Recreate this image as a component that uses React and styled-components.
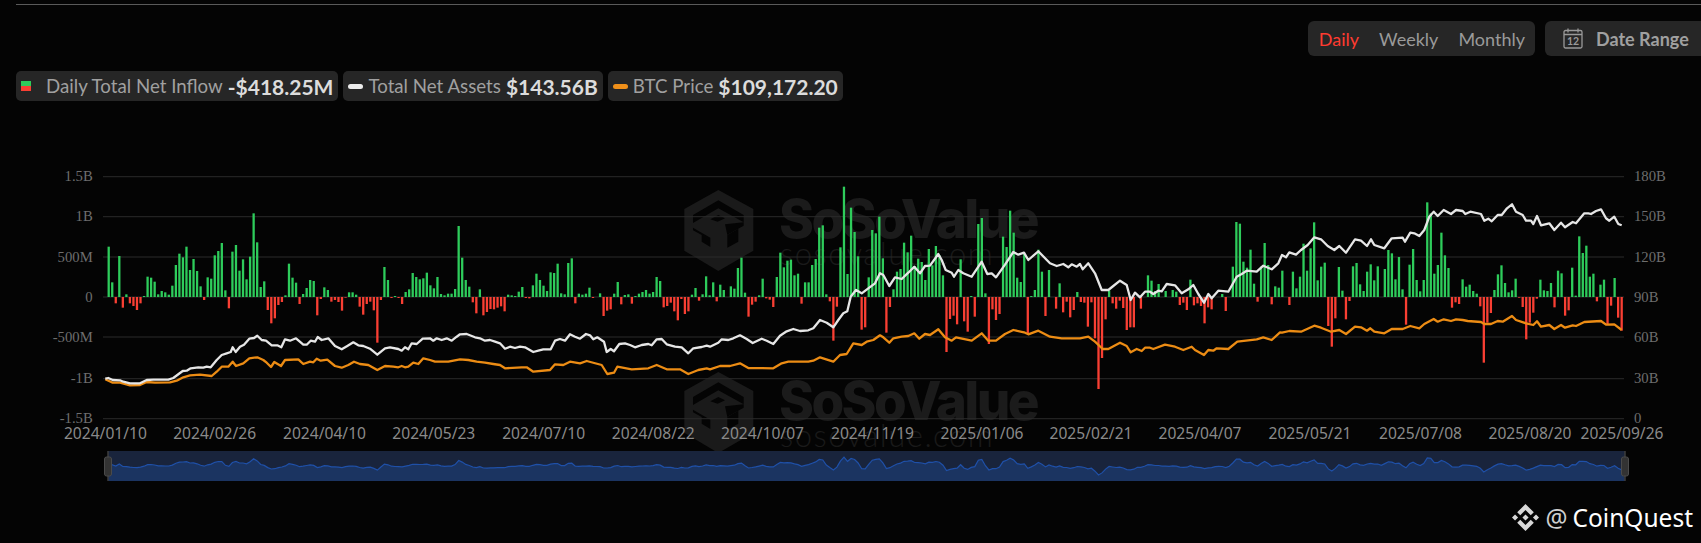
import React from "react";
import styled, { createGlobalStyle } from "styled-components";

const GlobalStyle = createGlobalStyle`
  html, body {
    margin: 0;
    padding: 0;
    background: #040404;
  }
`;

// daily net inflow, bar height measured in 1/3 px (positive = green, negative = red)
const inflow = [
  151, 44, -19, 123, -32, 8, -19, -27, -39, -19, 3, 61, 58, 46, 8, 18, 14, 7, 34, 96,
  130, 119, 151, 81, 114, 78, 32, -9, 59, 55, 125, 138, 162, 20, -34, 136, 156, 79, 113, 53,
  121, 251, 164, 30, 47, -39, -79, -64, -24, -15, 5, 100, 58, 43, -21, 9, 27, 51, 48, -55,
  -6, 29, 21, -14, -9, -15, -41, -2, 14, 14, 7, -29, -53, -21, -14, -40, -137, -9, 90, 51,
  -3, 3, -3, -21, 15, 23, 72, 60, 53, 56, 73, 35, 26, 60, 9, 5, 10, 10, 24, 213,
  118, 51, 31, -16, -49, 23, -55, -45, -36, -37, -32, -28, -43, 7, 5, 3, 16, 30, -3, -4,
  35, 70, 51, 34, 18, 74, 72, 100, 11, 8, 102, 116, -19, 10, 7, 10, 28, -3, 0, 11,
  -57, -41, -37, 10, 45, -22, 6, 8, -20, 3, 10, 15, 21, 10, 15, 60, 48, -31, -27, -17,
  -43, -70, -6, -51, -43, 7, 27, -11, 8, 62, 5, 44, -13, 37, 21, 0, 32, 25, 87, 118,
  13, -59, -23, -14, 5, 55, -4, -8, -30, 60, 133, 89, 109, 112, 65, 70, -20, 44, 44, 96,
  114, 208, 215, 8, -13, -131, -29, 149, 331, 69, 268, 195, 122, -98, -91, 59, 201, 191, 241, 116,
  -107, -30, 23, 76, 84, 163, 134, 184, 93, 115, 105, 51, 144, 95, 153, 125, 65, -165, -66, -56,
  -82, 113, -73, -104, 3, -59, 219, 237, 11, -141, -37, -69, -51, 181, 150, 259, 193, 58, 45, 129,
  -108, 3, 21, 142, 76, -57, 81, 0, -35, 41, -46, -14, -61, -39, 15, -15, -17, -89, -16, -124,
  -276, -183, -67, 20, -19, -35, -11, -33, -99, -91, -91, 0, -35, 0, 65, 49, 18, 39, 0, 18,
  0, 21, 16, -24, -17, -39, 52, -25, -19, -27, -79, -31, -37, 0, 0, 9, -42, 0, 91, 225,
  220, 106, 88, 142, 40, -14, 91, 162, 96, -22, 32, 28, 79, 0, -24, 76, 26, 61, 160, 79,
  146, 224, 50, 91, 103, -87, -149, -64, 90, 19, -67, -12, 92, 102, 38, 18, 76, 98, 50, 92,
  0, 84, 141, 131, 53, 120, 23, -83, 97, 144, 51, 17, 51, 284, 251, 70, 96, 193, 125, 87,
  -32, -16, -21, 53, 31, 37, 18, 10, -28, -197, -77, -48, 21, 68, 95, 42, 14, 20, 55, -2,
  -30, -127, -77, -47, -5, 52, 20, 18, 42, -31, 79, 71, -56, -40, 88, 4, 182, 132, 154, 61,
  70, -13, 37, 52, -82, -26, 57, -62, -101,
];

// line traces, read off in chunks of the chart: [x offset in 1/3 px, points]
const totalAssets = [
  [0, [196,686,205,684,218,690,240,691,250,695,270,700,300,700,320,690,340,689,385,689,400,684,428,663,440,662,452,655,475,652,490,653,500,650,512,652,530,630,545,615,560,610,572,606,578,592,587,606,600,590,612,584,628,566,642,564,652,557,665,570,678,572,695,586,712,586,724,592,735,568,750,572,768,565,790,584,800,584,812,572,825,575,833,561,845,570,865,565,885,588,905,598,922,588,940,577,955,586,970,588,990,596,1012,614,1035,595,1050,592,1075,597,1085,602,1095,592,1105,598,1115,580,1130,582,1148,566,1170,565,1180,572,1190,565,1205,570,1220,565,1235,572,1250,560]],
  [1260, [0,553,20,552,45,562,60,565,75,572,90,570,105,575,120,580,135,596,150,590,165,594,180,590,195,592,220,606,235,602,250,598,272,598,285,572,300,567,315,572,330,553,345,560,360,566,378,552,390,556,400,568,412,562,432,575,440,606,452,597,462,604,478,582,495,580,510,585,525,592,545,585,565,582,575,586,590,568,605,567,620,583,645,590,665,592,685,610,700,595,725,591,740,587,750,590,775,578,785,568,805,570,820,565,840,556,860,567,878,579,905,566,920,572,940,582,960,557,980,544,1000,537,1020,543,1045,541,1060,535,1080,510,1100,518,1120,532,1135,510,1150,490,1162,484,1172,440,1188,420,1205,430,1225,415,1245,400]],
  [2520, [0,370,10,375,28,408,45,382,65,387,85,368,103,350,120,370,135,348,150,347,175,312,185,330,197,360,215,368,222,380,235,360,250,370,275,380,305,335,322,372,335,370,348,382,375,344,400,306,415,314,432,308,445,330,475,304,510,340,530,348,550,342,565,352,575,343,590,350,600,342,608,358,625,340,645,370,665,420,685,420,700,408,720,392,740,405,752,450,765,428,780,442,795,425,810,425,820,432,835,422,845,424,860,402,885,406,905,430,925,418,940,405,955,432,972,458,985,432,995,445,1015,422,1045,425,1070,380,1085,372,1100,362,1130,365,1150,347,1175,358,1195,340]],
  [3723, [3,315,15,322,25,307,45,314,60,300,80,285,100,262,120,268,140,288,160,300,175,288,195,308,222,268,240,272,258,288,270,268,280,285,310,295,332,265,365,263,372,275,388,248,400,250,415,258,430,240,445,200,458,185,470,198,488,180,510,192,525,180,545,183,553,192,568,185,600,192,610,212,622,206,632,214,650,195,662,195,678,175,693,163,705,185,725,195,735,212,750,212,757,222,768,198,780,226,805,220,820,240,840,218,852,232,875,216,885,220,910,190,922,190,930,192,945,183,960,178,975,205,985,212,1000,200,1012,222,1022,226]],
];

const btcPrice = [
  [0, [196,688,218,698,240,698,270,706,300,705,320,696,345,698,390,697,410,692,430,682,450,676,480,674,515,678,530,665,545,650,565,650,578,635,588,648,610,640,628,625,652,622,670,630,680,638,693,651,703,636,723,648,735,630,775,628,790,642,810,635,820,637,830,626,842,632,862,629,885,648,905,653,925,645,942,635,960,642,985,645,1012,660,1035,648,1060,650,1075,652,1085,648,1095,652,1105,650,1120,638,1135,642,1150,625,1170,630,1185,635,1225,635]],
  [1260, [0,628,25,630,50,635,75,638,100,642,120,645,135,655,185,652,200,652,220,665,270,660,285,643,310,645,330,635,360,640,380,633,425,645,442,672,462,668,472,650,515,658,565,655,590,645,620,658,660,658,685,672,715,660,740,655,750,658,780,648,810,648,840,640,865,654,940,655,965,640,985,635,1045,635,1060,632,1080,622,1120,635,1140,615,1160,612,1180,580,1205,585,1220,575,1240,570]],
  [2520, [0,556,10,562,28,578,40,565,65,560,85,558,103,550,118,566,135,552,150,555,175,538,195,562,215,572,228,562,275,572,305,550,325,572,348,572,375,552,400,540,432,547,445,553,475,542,510,560,545,565,600,565,625,560,645,575,668,597,685,597,720,578,740,588,752,607,770,597,785,603,795,593,810,593,820,597,855,584,885,590,910,600,935,590,945,600,972,615,985,600,1000,602,1010,595,1045,597,1072,575,1130,568,1150,562,1175,570,1200,547]],
  [3723, [3,548,25,543,60,545,100,527,120,533,150,545,175,540,195,552,222,530,240,532,258,542,268,535,280,545,310,550,332,537,365,537,388,528,415,535,430,522,458,507,470,515,488,508,510,513,525,508,545,510,560,513,600,516,610,522,630,522,650,513,665,515,693,498,705,510,735,520,757,525,768,514,780,530,805,525,820,537,840,525,852,533,875,526,885,528,910,516,960,513,975,524,1000,523,1022,540]],
];

const toPoints = (trace) =>
  trace
    .flatMap(([offset, pts]) => {
      const out = [];
      for (let i = 0; i < pts.length; i += 2) {
        out.push(`${(40 + (offset + pts[i]) / 3).toFixed(1)},${(150 + pts[i + 1] / 3).toFixed(1)}`);
      }
      return out;
    })
    .join(" ");

const BAR_START = 108.7;
const BAR_STEP = 3.535;
const BASELINE = 297;

const leftTicks = [
  ["1.5B", 176.7],
  ["1B", 216.7],
  ["500M", 257],
  ["0", 297],
  ["-500M", 337],
  ["-1B", 378.7],
  ["-1.5B", 418.7],
];
const rightTicks = ["180B", "150B", "120B", "90B", "60B", "30B", "0"];

const dateTicks = [
  ["2024/01/10", 105.4],
  ["2024/02/26", 214.7],
  ["2024/04/10", 324.5],
  ["2024/05/23", 433.8],
  ["2024/07/10", 543.7],
  ["2024/08/22", 653.3],
  ["2024/10/07", 762.5],
  ["2024/11/19", 872.5],
  ["2025/01/06", 982],
  ["2025/02/21", 1091],
  ["2025/04/07", 1200],
  ["2025/05/21", 1310],
  ["2025/07/08", 1420.5],
  ["2025/08/20", 1530],
  ["2025/09/26", 1622],
];

const Page = styled.div`
  position: relative;
  width: 1701px;
  height: 543px;
  overflow: hidden;
  background: #040404;
  font-family: Lato, "Noto Sans", sans-serif;
`;

const TopRule = styled.div`
  height: 1px;
  margin: 4px 0 0 16px;
  background: #5a5a5a;
`;

const Toolbar = styled.div`
  display: flex;
  justify-content: flex-end;
  gap: 10px;
  height: 35px;
  margin: 16px -20px 0 0;
`;

const Segments = styled.div`
  display: flex;
  align-items: center;
  gap: 20px;
  padding: 0 10px 0 11px;
  border-radius: 6px;
  background: #262626;
`;

const Segment = styled.span`
  font-size: 18px;
  color: ${(p) => (p.$active ? "#ff3b30" : "#9a9a9a")};
`;

const RangeButton = styled.div`
  display: flex;
  align-items: center;
  gap: 13px;
  width: 176px;
  padding-left: 18px;
  box-sizing: border-box;
  border-radius: 6px;
  background: #262626;
  font-size: 18px;
  font-weight: 700;
  color: #a0a0a0;
`;

const Legend = styled.div`
  display: flex;
  gap: 5px;
  height: 30px;
  margin: 15px 0 0 16px;
`;

const Chip = styled.div`
  display: flex;
  align-items: center;
  padding: 0 5px;
  border-radius: 5px;
  background: #262626;
`;

const BarMark = styled.i`
  width: 10px;
  height: 10px;
  margin-right: 15px;
  background: linear-gradient(#2ecc5b 50%, #f93f33 50%);
`;

const LineMark = styled.i`
  width: 15px;
  height: 5px;
  margin-right: 5px;
  border-radius: 3px;
  background: ${(p) => p.$color};
`;

const Label = styled.span`
  font-size: 18.7px;
  color: #a0a0a0;
`;

const Value = styled.b`
  margin-left: 5px;
  font-size: 21px;
  font-weight: 700;
  color: #dcdcdc;
`;

const ChartSvg = styled.svg`
  display: block;
  margin-top: 9px;
`;

const AxisValue = styled.text`
  font-family: "Liberation Serif", serif;
  font-size: 14.7px;
  fill: #6e6e6e;
`;

const AxisDate = styled.text`
  font-family: "Noto Sans", sans-serif;
  font-size: 15.6px;
  fill: #8a8a8a;
  text-anchor: middle;
`;

const MarkTitle = styled.text`
  font-family: Inter, sans-serif;
  font-size: 53px;
  font-weight: 800;
  letter-spacing: -2.6px;
  fill: #1b1b1b;
`;

const MarkSite = styled.text`
  font-family: Lato, sans-serif;
  font-size: 31px;
  font-weight: 300;
  fill: #1a1a1a;
  letter-spacing: 1.5px;
`;

const Signature = styled.div`
  position: absolute;
  right: 8px;
  bottom: 9px;
  display: flex;
  align-items: center;
  font-family: "Noto Sans", sans-serif;
  font-size: 24.5px;
  color: #fff;
`;

const SignatureAt = styled.span`
  margin: 0 5px 0 7px;
  color: #cfcfcf;
`;

const CalendarIcon = () => (
  <svg width="20" height="21" viewBox="0 0 20 21" fill="none" stroke="#999" strokeWidth="1.3">
    <rect x="1" y="2.5" width="18" height="17.5" rx="1.5" />
    <path d="M1 6.5h18M5 0.5v4M15 0.5v4" />
    <text x="10" y="17" textAnchor="middle" fontFamily="Lato" fontSize="10.5" fontWeight="700" fill="#999" stroke="none">
      12
    </text>
  </svg>
);

const BinanceLogo = () => (
  <svg width="27" height="27" viewBox="0 0 126.61 126.61" fill="#d8d8d8">
    <path d="M38.73 53.2l24.59-24.58 24.6 24.6 14.3-14.31L63.32 0 24.43 38.9zM0 63.31l14.3-14.31 14.31 14.31-14.31 14.3zM38.73 73.41l24.59 24.59 24.6-24.6 14.31 14.29-38.9 38.91-38.91-38.88-.02-.02zM98.28 63.32l14.3-14.31 14.31 14.3-14.31 14.32zM77.83 63.3L63.32 48.78 52.59 59.51l-1.24 1.23-2.54 2.54 14.51 14.5 14.5-14.47z" />
  </svg>
);

const Watermark = ({ dy }) => (
  <g transform={`translate(0 ${dy})`}>
    <g transform="translate(675 185) scale(0.3333)">
      <polygon points="130,15 235,72 235,197 130,258 28,197 28,72" fill="#1a1a1a" />
      <g fill="#040404">
        <polygon points="54,90 130,46 206,90 206,112 130,70 76,101 54,114" />
        <polygon points="157,150 190,131 190,170 157,188" />
        <polygon points="54,128 106,158 106,186 80,170 80,150 54,136" />
        <polygon points="106,103 130,90 150,100 128,110" />
        <polygon points="150,118 206,112 206,122 160,148 157,150" />
      </g>
    </g>
    <MarkTitle x="779" y="238">SoSoValue</MarkTitle>
    <MarkSite x="780" y="265">sosovalue.com</MarkSite>
  </g>
);

const Handle = ({ x }) => (
  <g>
    <line x1={x} x2={x} y1="451" y2="481" stroke="#3c3c3c" strokeWidth="1.5" />
    <rect x={x - 3.5} y="457" width="7" height="19" rx="2" fill="#333" stroke="#4a4a4a" />
  </g>
);

const Chart = () => {
  // overview strip: same series, softened a little
  const sliderLine = inflow
    .map((v, i) => {
      const soft = ((inflow[i - 1] ?? v) + 4 * v + (inflow[i + 1] ?? v)) / 6;
      return `${(BAR_START + i * BAR_STEP).toFixed(1)},${(466.5 - soft * 0.036).toFixed(1)}`;
    })
    .join(" ");

  return (
    <ChartSvg width="1701" height="433" viewBox="0 110 1701 433">
      <Watermark dy={0} />
      <Watermark dy={182} />

      {leftTicks.map(([label, y]) => (
        <g key={label}>
          <line x1="103" x2="1624" y1={y} y2={y} stroke="#2a2a2a" />
          <AxisValue x="92.7" y={y + 4.5} textAnchor="end">{label}</AxisValue>
        </g>
      ))}
      {rightTicks.map((label, i) => (
        <AxisValue key={label} x="1634" y={leftTicks[i][1] + 4.5}>{label}</AxisValue>
      ))}

      {inflow.map((v, i) =>
        v === 0 ? null : (
          <rect
            key={i}
            x={BAR_START + i * BAR_STEP - 1.15}
            y={v > 0 ? BASELINE - v / 3 : BASELINE}
            width="2.3"
            height={Math.abs(v) / 3}
            fill={v > 0 ? "#2ecc5b" : "#f93f33"}
          />
        )
      )}

      <polyline points={toPoints(btcPrice)} fill="none" stroke="#ec8c14" strokeWidth="2.3" strokeLinejoin="round" />
      <polyline points={toPoints(totalAssets)} fill="none" stroke="#e6e6e6" strokeWidth="2.3" strokeLinejoin="round" />

      {dateTicks.map(([label, x]) => (
        <AxisDate key={label} x={x} y="439">{label}</AxisDate>
      ))}

      <rect x="108" y="451" width="1517" height="30" fill="#19243c" />
      <polygon points={`108,481 ${sliderLine} 1625,481`} fill="#1b3461" />
      <polyline points={sliderLine} fill="none" stroke="#1f50a8" strokeWidth="1.2" />
      <Handle x={108} />
      <Handle x={1625} />
    </ChartSvg>
  );
};

export default function App() {
  return (
    <Page>
      <GlobalStyle />
      <TopRule />
      <Toolbar>
        <Segments>
          <Segment $active>Daily</Segment>
          <Segment>Weekly</Segment>
          <Segment>Monthly</Segment>
        </Segments>
        <RangeButton>
          <CalendarIcon />
          Date Range
        </RangeButton>
      </Toolbar>
      <Legend>
        <Chip>
          <BarMark />
          <Label>Daily Total Net Inflow</Label>
          <Value>-$418.25M</Value>
        </Chip>
        <Chip>
          <LineMark $color="#ececec" />
          <Label>Total Net Assets</Label>
          <Value>$143.56B</Value>
        </Chip>
        <Chip>
          <LineMark $color="#f0901a" />
          <Label>BTC Price</Label>
          <Value>$109,172.20</Value>
        </Chip>
      </Legend>
      <Chart />
      <Signature>
        <BinanceLogo />
        <SignatureAt>@</SignatureAt>
        CoinQuest
      </Signature>
    </Page>
  );
}
